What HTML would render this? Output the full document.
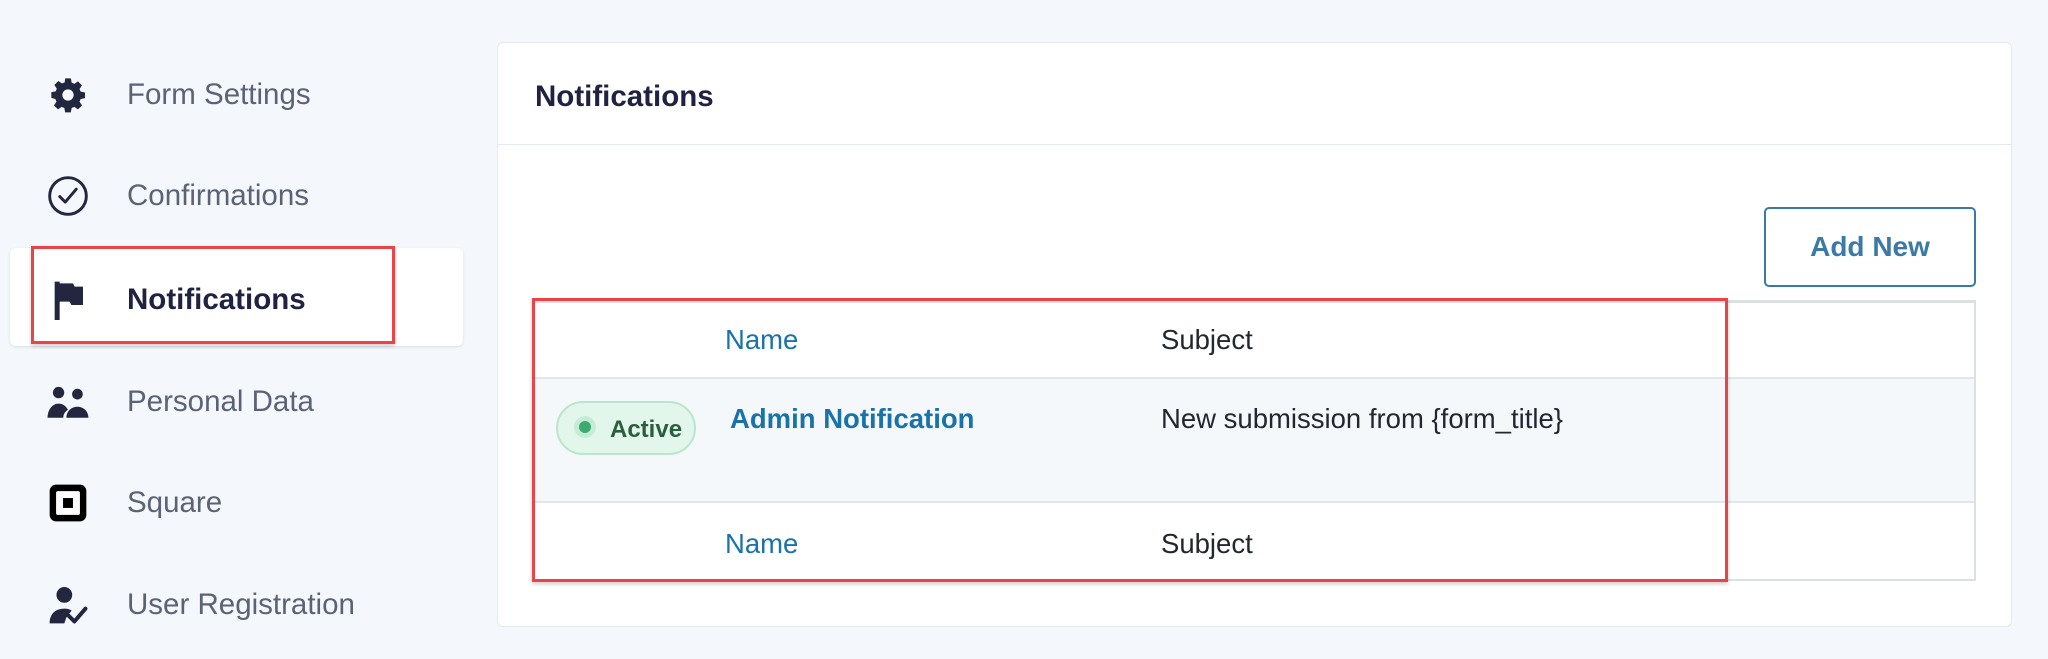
<!DOCTYPE html>
<html><head><meta charset="utf-8"><style>
*{box-sizing:border-box;margin:0;padding:0}
body{width:2048px;height:659px;background:#f4f7fb;font-family:"Liberation Sans",sans-serif;position:relative;overflow:hidden}
.abs{position:absolute}
.item{position:absolute;left:0;width:470px;height:40px;display:flex;align-items:center}
.item .ic{position:absolute;left:46px;width:44px;height:44px;display:flex;align-items:center;justify-content:center}
.item .tx{position:absolute;left:127px;font-size:29.5px;color:#5b6275}
.panel{left:497px;top:42px;width:1515px;height:585px;background:#fff;border:1px solid #e6e9ef;border-radius:6px}
.t{position:absolute;font-size:27.5px;transform:translateY(-50%);white-space:nowrap}
</style></head><body>

<div class="item" style="top:75px"><div class="ic"><svg width="40" height="40" viewBox="0 0 24 24"><path fill="#23263f" d="M10.3 2h3.4l.5 2.6 1.6.7 2.2-1.5 2.4 2.4-1.5 2.2.7 1.6 2.6.5v3.4l-2.6.5-.7 1.6 1.5 2.2-2.4 2.4-2.2-1.5-1.6.7-.5 2.6h-3.4l-.5-2.6-1.6-.7-2.2 1.5-2.4-2.4 1.5-2.2-.7-1.6L2 13.7v-3.4l2.6-.5.7-1.6-1.5-2.2 2.4-2.4 2.2 1.5 1.6-.7zM12 8.6a3.4 3.4 0 100 6.8 3.4 3.4 0 000-6.8z"/></svg></div><div class="tx">Form Settings</div></div>

<div class="item" style="top:176px"><div class="ic"><svg width="44" height="44" viewBox="0 0 24 24" fill="none" stroke="#23263f" stroke-width="1.6"><circle cx="12" cy="12" r="10"/><path d="M7.5 12.3l3 3 6-7" stroke-linecap="round" stroke-linejoin="round"/></svg></div><div class="tx">Confirmations</div></div>

<div class="abs" style="left:10px;top:248px;width:453px;height:98px;background:#fff;border-radius:6px;box-shadow:0 1px 3px rgba(0,0,0,.1)"></div>
<div class="item" style="top:280px"><div class="ic"><svg width="40" height="44" viewBox="0 0 24 26"><path fill="#23263f" d="M4 2h3v23H4zM7 3h8l1 2h5v11h-7l-1-2H7z"/></svg></div><div class="tx" style="color:#1f2240;font-weight:bold">Notifications</div></div>
<div class="abs" style="left:31px;top:246px;width:364px;height:98px;border:3px solid #e8444a;box-shadow:0 2px 4px rgba(0,0,0,.2)"></div>

<div class="item" style="top:382px"><div class="ic"><svg width="46" height="40" viewBox="0 0 28 24"><circle cx="8" cy="6" r="3.6" fill="#23263f"/><circle cx="20" cy="7" r="3.4" fill="#23263f"/><path fill="#23263f" d="M1 22c0-5 3-9 7-9 3 0 5 2 6 4-2 1-3 3-3 5zM13 22c0-4 3-7 7-7s7 3 7 7z"/></svg></div><div class="tx">Personal Data</div></div>

<div class="item" style="top:483px"><div class="ic"><svg width="44" height="44" viewBox="0 0 24 24"><rect x="2" y="2" width="20" height="20" rx="3.5" fill="#000"/><rect x="5.5" y="5.5" width="13" height="13" rx="1" fill="#fff"/><rect x="9.3" y="9.3" width="5.4" height="5.4" fill="#000"/></svg></div><div class="tx">Square</div></div>

<div class="item" style="top:585px"><div class="ic"><svg width="44" height="44" viewBox="0 0 24 24"><circle cx="10" cy="6.5" r="4.3" fill="#23263f"/><path fill="#23263f" d="M2 22c0-5 3-8 8-8 2 0 3 .5 4 1l-3 4-1 3z"/><path d="M12.5 18l3 3 6-7" fill="none" stroke="#23263f" stroke-width="2.2" stroke-linecap="round" stroke-linejoin="round"/></svg></div><div class="tx">User Registration</div></div>

<div class="abs panel"></div>
<div class="abs" style="left:497px;top:144px;width:1515px;height:1px;background:#e6e9ef"></div>
<div class="t" style="left:535px;top:97px;font-size:29.5px;font-weight:bold;color:#1f2240">Notifications</div>

<div class="abs" style="left:1764px;top:207px;width:212px;height:80px;border:2px solid #3b7aa6;border-radius:5px;color:#3b7aa6;font-size:28px;font-weight:bold;display:flex;align-items:center;justify-content:center">Add New</div>

<div class="abs" style="left:532px;top:300px;width:1444px;height:281px;border:2px solid #dcdfe4;border-top-width:3px;background:#fff"></div>
<div class="abs" style="left:534px;top:377px;width:1440px;height:126px;background:#f5f8fb;border-top:2px solid #e1e5ee;border-bottom:2px solid #e1e5ee"></div>

<div class="t" style="left:725px;top:340px;color:#1a73a8">Name</div>
<div class="t" style="left:1161px;top:340px;color:#24262f">Subject</div>

<div class="abs" style="left:556px;top:401px;width:140px;height:54px;border:2px solid #b9e6cc;background:#e3f6ec;border-radius:27px"></div>
<div class="abs" style="left:574px;top:416px;width:22px;height:22px;border-radius:50%;background:#c6ecd6"></div>
<div class="abs" style="left:579px;top:421px;width:12px;height:12px;border-radius:50%;background:#3aad6e"></div>
<div class="t" style="left:610px;top:430px;font-size:24px;font-weight:bold;color:#2a5e3f">Active</div>
<div class="t" style="left:730px;top:419px;font-weight:bold;color:#1a73a8">Admin Notification</div>
<div class="t" style="left:1161px;top:419px;color:#24262f">New submission from {form_title}</div>

<div class="t" style="left:725px;top:544px;color:#1a73a8">Name</div>
<div class="t" style="left:1161px;top:544px;color:#24262f">Subject</div>

<div class="abs" style="left:532px;top:298px;width:1196px;height:284px;border:3px solid #e8444a;box-shadow:0 2px 4px rgba(0,0,0,.2)"></div>
</body></html>
